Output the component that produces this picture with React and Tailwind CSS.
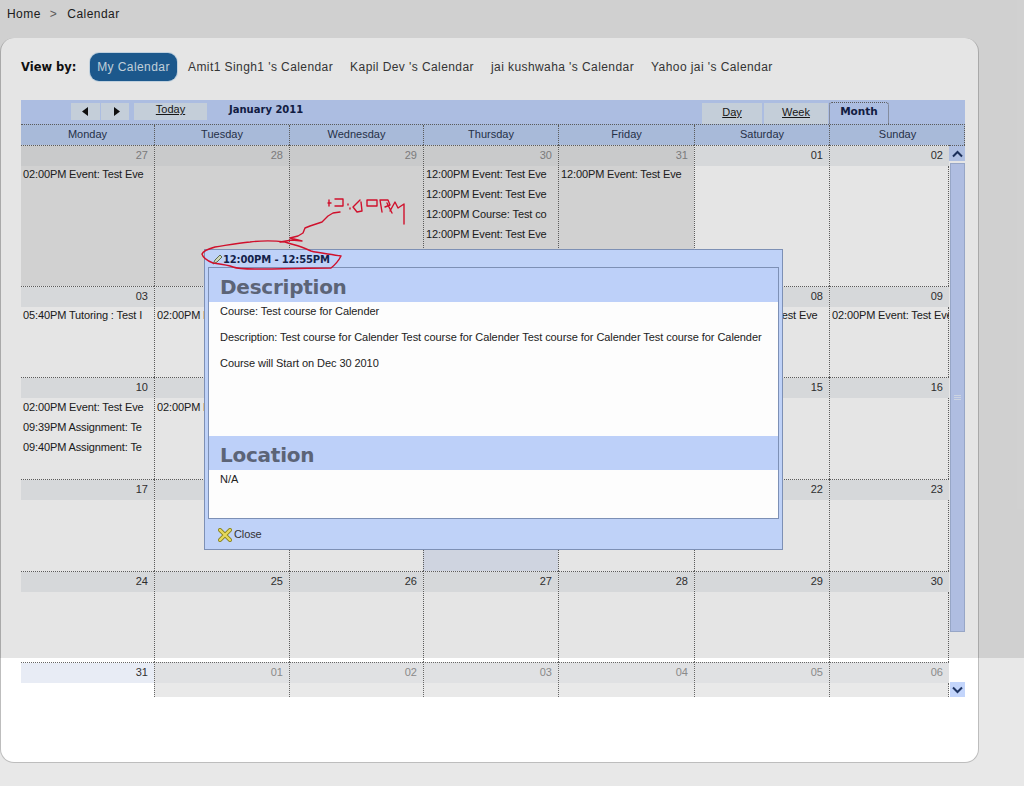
import React from 'react'

const days = ['Monday', 'Tuesday', 'Wednesday', 'Thursday', 'Friday', 'Saturday', 'Sunday']
const viewers = ["Amit1 Singh1 's Calendar", "Kapil Dev 's Calendar", "jai kushwaha 's Calendar", "Yahoo jai 's Calendar"]

const ev = '02:00PM Event: Test Eve'
const noon = '12:00PM Event: Test Eve'

// o = outside the month, t = today
const rows = [
  { h: 'h-[141px]', cells: [
    { d: '27', o: 1, e: [ev] }, { d: '28', o: 1 }, { d: '29', o: 1 },
    { d: '30', o: 1, e: [noon, noon, '12:00PM Course: Test co', noon] },
    { d: '31', o: 1, e: [noon] }, { d: '01' }, { d: '02' },
  ] },
  { h: 'h-[91px]', cells: [
    { d: '03', e: ['05:40PM Tutoring : Test I'] }, { d: '04', e: [ev] }, { d: '05' }, { d: '06' }, { d: '07' },
    { d: '08', e: [ev] }, { d: '09', e: ['02:00PM Event: Test Eve'] },
  ] },
  { h: 'h-[102px]', pad: 'pt-[1px]', cells: [
    { d: '10', e: [ev, '09:39PM Assignment: Te', '09:40PM Assignment: Te'] }, { d: '11', e: [ev] }, { d: '12' }, { d: '13' }, { d: '14' }, { d: '15' }, { d: '16' },
  ] },
  { h: 'h-[92px]', cells: [
    { d: '17' }, { d: '18' }, { d: '19' }, { d: '20', t: 1 }, { d: '21' }, { d: '22' }, { d: '23' },
  ] },
  { h: 'h-[91px]', cells: [
    { d: '24' }, { d: '25' }, { d: '26' }, { d: '27' }, { d: '28' }, { d: '29' }, { d: '30' },
  ] },
  { h: 'h-[35px]', cells: [
    { d: '31', last: 1 }, { d: '01', o: 1 }, { d: '02', o: 1 }, { d: '03', o: 1 }, { d: '04', o: 1 }, { d: '05', o: 1 }, { d: '06', o: 1 },
  ] },
]

const Cell = ({ cell, first, right, pad }) => {
  const bg = cell.o ? 'bg-[#e9e9e9]' : cell.t ? 'bg-[#e7ecfa]' : 'bg-white'
  const band = cell.o ? 'bg-[#e0e1e3] text-[#8a8a8a]' : cell.last ? 'bg-[#e8ecf5] text-[#333]' : 'bg-[#eff1f3] text-[#333]'
  return (
    <div className={`flex min-w-0 flex-col overflow-hidden border-t border-dotted border-[#666] ${first ? '' : 'border-l'} ${bg}`}>
      <div className={`h-5 shrink-0 pr-[6px] text-right text-[11px] leading-[19px] ${band}`}>{cell.d}</div>
      <div className={`flex-1 border-dotted border-[#666] ${right ? 'border-r' : ''} ${pad || ''}`}>
        {(cell.e || []).map((t, i) => (
          <div key={i} className="h-5 whitespace-nowrap pl-[2px] text-[11px] leading-[16px] tracking-[-0.12px] text-[#222]">{t}</div>
        ))}
      </div>
    </div>
  )
}

const Chevron = ({ down }) => (
  <svg width="11" height="8" viewBox="0 0 11 8" className={down ? 'rotate-180' : ''}>
    <path d="M1 6.5 L5.5 2 L10 6.5" fill="none" stroke="#1f3564" strokeWidth="2" />
  </svg>
)

const Scrollbar = () => (
  <div className="flex w-4 flex-col items-center bg-white">
    <div className="flex h-[16px] w-[16px] items-center justify-center border-t border-dotted border-[#666] bg-[#c3d5fb]"><Chevron /></div>
    <div className="mt-[2px] flex h-[469px] w-[15px] flex-col items-center justify-center gap-[1px] border border-[#a9b9dd] bg-[#c3d3fb]">
      <div className="h-[1px] w-[7px] bg-[#e4ebfb]" />
      <div className="h-[1px] w-[7px] bg-[#e4ebfb]" />
      <div className="h-[1px] w-[7px] bg-[#e4ebfb]" />
    </div>
    <div className="flex-1" />
    <div className="flex h-[15px] w-[15px] items-center justify-center bg-[#c3d5fb]"><Chevron down /></div>
  </div>
)

const Toolbar = () => (
  <div className="flex h-6 items-start bg-[#c0d3fb] pl-[50px] pt-[3px] text-[#1a1a1a]">
    <button className="flex h-[17px] w-[29px] items-center justify-center bg-[#dbe6f2] pr-[2px]">
      <svg width="6" height="9" viewBox="0 0 6 9"><path d="M6 0 L0 4.5 L6 9 Z" fill="#111" /></svg>
    </button>
    <button className="ml-[1px] flex h-[17px] w-[28px] items-center justify-center bg-[#dbe6f2] pl-[3px]">
      <svg width="6" height="9" viewBox="0 0 6 9"><path d="M0 0 L6 4.5 L0 9 Z" fill="#111" /></svg>
    </button>
    <button className="ml-[5px] flex h-[17px] w-[73px] justify-center bg-[#dbe6f2] text-[11px] leading-[12px] underline">Today</button>
    <div className="ml-[22px] font-['DejaVu_Sans'] text-[10px] font-bold leading-[13px] text-[#14224a]">January 2011</div>
    <div className="flex-1" />
    <button className="flex h-[21px] w-[60px] justify-center bg-[#dbe6f2] text-[11px] leading-[18px] underline">Day</button>
    <button className="ml-[2px] flex h-[21px] w-[64px] justify-center bg-[#dbe6f2] text-[11px] leading-[18px] underline">Week</button>
    <div className="relative z-10 ml-[1px] h-[22px] w-[60px] -translate-y-[1px] rounded-t-[3px] border-x border-t border-dotted border-[#666] bg-[#c0d3fb] text-center font-['DejaVu_Sans'] text-[10.5px] font-bold leading-[17px] text-[#14224a]">Month</div>
    <div className="w-[76px]" />
  </div>
)

const Calendar = () => (
  <div className="mt-[19px] w-[944px] overflow-hidden">
    <Toolbar />
    <div className="grid h-[21px] grid-cols-[133px_135px_134px_135px_136px_135px_136px] border-t border-r border-dotted border-[#666] bg-[#bcd0f2]">
      {days.map((d, i) => (
        <div key={d} className={`text-center text-[11px] leading-[18px] text-[#2a3650] ${i ? 'border-l border-dotted border-[#666]' : ''}`}>{d}</div>
      ))}
    </div>
    <div className="flex">
      <div className="w-[928px]">
        {rows.map((r, i) => (
          <div key={i} className={`grid grid-cols-[133px_135px_134px_135px_136px_135px_120px] ${r.h}`}>
            {r.cells.map((c, j) => <Cell key={j} cell={c} first={j === 0} right={j === 6} pad={r.pad} />)}
          </div>
        ))}
      </div>
      <Scrollbar />
    </div>
  </div>
)

const Modal = () => (
  <div className="absolute left-[204px] top-[249px] z-20 flex h-[301px] w-[579px] flex-col border border-[#7d90b5] bg-[#bfd2f8] px-[3px]">
    <div className="flex h-[17px] items-center pl-[3px] pt-[2px]">
      <svg width="12" height="11" viewBox="0 0 12 11">
        <path d="M2 10 L4 6 L9 1 L11 3 L6 8 Z" fill="#cfd6b8" stroke="#5d6d52" strokeWidth="1" />
      </svg>
      <span className="font-['DejaVu_Sans'] text-[10px] font-bold leading-none tracking-[-0.15px] text-[#14224a]">12:00PM - 12:55PM</span>
    </div>
    <div className="flex h-[252px] flex-col border border-[#7d90b5]">
      <div className="h-[34px] bg-[#bdd0f9] pl-[11px] font-['DejaVu_Sans'] text-[20px] font-bold leading-[38px] tracking-[-0.25px] text-[#5c6477]">Description</div>
      <div className="h-[134px] bg-[#fdfdfd] pl-[11px] pt-[1px] text-[11px] leading-[16px] tracking-[-0.065px] text-[#222]">
        <div>Course: Test course for Calender</div>
        <div className="mt-[10px]">Description: Test course for Calender Test course for Calender Test course for Calender Test course for Calender</div>
        <div className="mt-[10px]">Course will Start on Dec 30 2010</div>
      </div>
      <div className="h-[34px] bg-[#bdd0f9] pl-[11px] font-['DejaVu_Sans'] text-[20px] font-bold leading-[38px] tracking-[-0.25px] text-[#5c6477]">Location</div>
      <div className="flex-1 bg-[#fdfdfd] pl-[11px] pt-[1px] text-[11px] leading-[16px] text-[#222]">N/A</div>
    </div>
    <div className="flex flex-1 items-center pl-[10px] pt-[1px] text-[11px] tracking-[-0.1px] text-[#333]">
      <svg width="14" height="14" viewBox="0 0 14 14">
        <path d="M2 2 L12 12 M12 2 L2 12" stroke="#8a8420" strokeWidth="4" strokeLinecap="round" />
        <path d="M2 2 L12 12 M12 2 L2 12" stroke="#e6d85c" strokeWidth="2.4" strokeLinecap="round" />
      </svg>
      <span className="ml-[2px]">Close</span>
    </div>
  </div>
)

// red marker scribble made on the screenshot
const Scribble = () => (
  <svg className="absolute left-0 top-0 z-30" width="1024" height="786" fill="none" stroke="#d0102c" strokeWidth="1.4" strokeLinejoin="round" strokeLinecap="round">
    <path d="M285 242 C270 240 258 241 250 242 C238 243 228 245 215 247 C208 249 203 251 202 254 C203 258 208 261 213 263 C220 264 228 265 233 267 C238 269 245 269 255 269 C280 269 310 268 331 268 C336 264 339 260 341 256 C330 254 318 253 311 251 C304 248 299 246 295 245 C291 244 288 243 285 242" />
    <path d="M280 242 L292 240 L302 241 L290 238 L298 236 L303 233 L305 228 L310 226 L322 222 L328 216 L333 213 L340 212" />
    <path d="M329 200 L329 206 M328 203 L331 203 M335 199 L343 199 L343 206 L335 206 M348 204 L348 205 M350 208 L350 209 M360 200 L353 207 L357 212 L362 211 L361 202 M367 200 L377 200 L377 206 L367 206 Z M380 200 L382 212 M380 200 L388 200 L390 205 L385 207 M387 203 L392 213 M390 211 L395 202 L398 208 L404 204 L404 224" />
  </svg>
)

const App = () => (
  <div className="relative h-[786px] w-[1024px] overflow-hidden bg-[#e8e8e8] font-['Liberation_Sans',Arial,sans-serif]">
    <div className="flex h-[38px] items-start gap-[9px] pl-[7px] pt-[6px] text-[12px] leading-[17px] tracking-[0.45px] text-[#222]">
      <span>Home</span>
      <span className="text-[#666]">&gt;</span>
      <span className="ml-[1px]">Calendar</span>
    </div>
    <div className="h-[725px] w-[979px] rounded-[14px] border-x border-b border-[#bdbdbd] bg-white pl-[20px] pt-[15px]">
      <div className="flex h-[28px] items-center text-[12px] tracking-[0.42px] text-[#3a3a3a]">
        <span className="w-[69px] pt-[2px] font-['DejaVu_Sans'] text-[11.5px] font-bold tracking-normal text-[#111]">View by:</span>
        <span className="flex h-[28px] w-[87px] items-center justify-center rounded-[9px] bg-[#20629c] text-[#d8e6f2] ring-1 ring-[#d6e8f6]">My Calendar</span>
        <div className="ml-[11px] flex gap-[17px]">
          {viewers.map((v) => <span key={v}>{v}</span>)}
        </div>
      </div>
      <Calendar />
    </div>
    {/* dim layer of the dialog, it stops short of the page bottom */}
    <div className="absolute inset-x-0 top-0 z-10 h-[658px] bg-black/10" />
    <Modal />
    <Scribble />
  </div>
)

export default App
